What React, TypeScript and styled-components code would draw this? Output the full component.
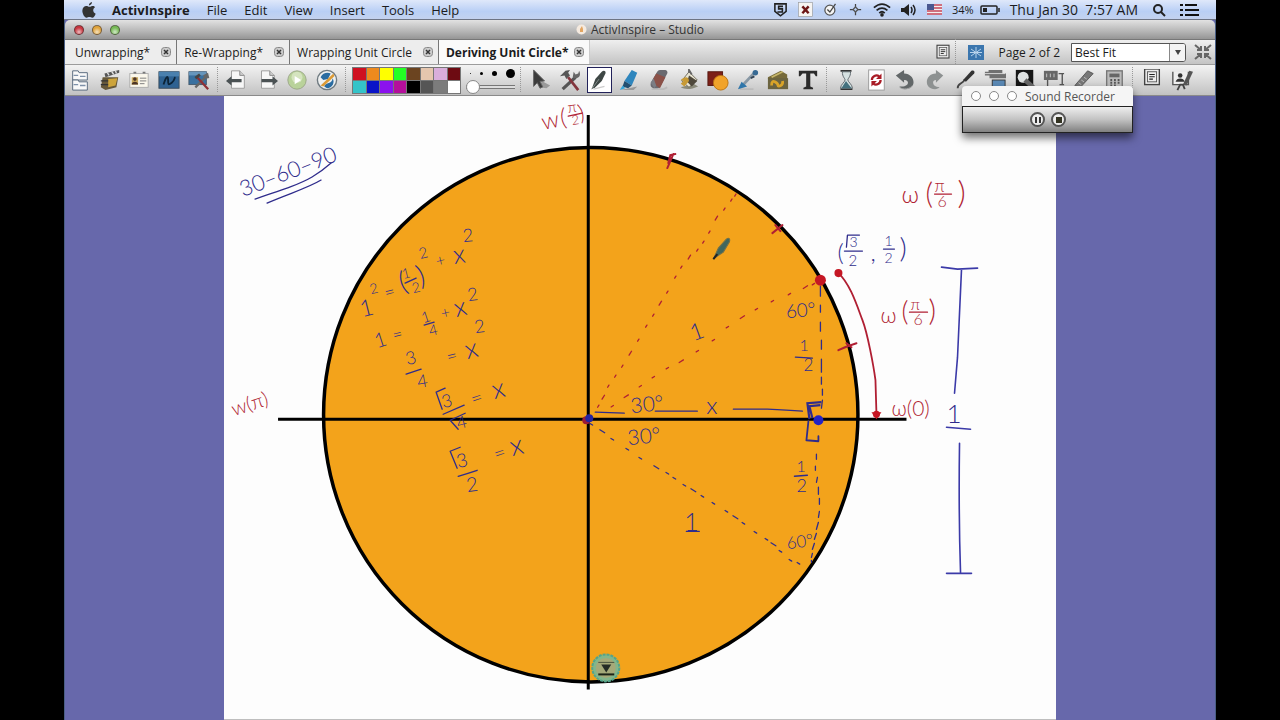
import React from 'react';
import styled, { createGlobalStyle, css } from 'styled-components';

const GlobalStyle = createGlobalStyle`
  *, *::before, *::after { box-sizing: border-box; }
  html { background: #000; }
  body { margin: 0; background: #000; font-family: "Open Sans", "Noto Sans", sans-serif; color: #1c1c20; }
  button, select { font: inherit; color: inherit; }
  button { display: inline-flex; align-items: center; justify-content: center; padding: 0; border: 0; background: none; }
  svg { display: block; }
`;

/* ---------- desktop frame ---------- */

const Desktop = styled.div`
  position: relative;
  margin: 0 5%;
  min-height: 100vh;
  display: flex;
  flex-direction: column;
  overflow: hidden;
  background: #4a5f85;
`;

const MenuBar = styled.nav`
  height: 20px;
  display: flex;
  align-items: center;
  padding: 0 17px;
  font-size: 13px;
  line-height: 18px;
  background: linear-gradient(#dfe8fa, #b9cff5 60%, #c3d2ef);
  border-bottom: 1px solid #6d7484;
`;

const AppleButton = styled.button`
  width: 16px;
  margin-right: 15px;
`;

const MenuItem = styled.button<{ $strong?: boolean }>`
  margin-right: 17px;
  white-space: nowrap;
  font-weight: ${(p) => (p.$strong ? 700 : 400)};
`;

const StatusArea = styled.div`
  margin-left: auto;
  display: flex;
  align-items: center;
  gap: 10px;
`;

const Percent = styled.span`
  font-size: 11px;
  margin-right: -4px;
`;

const Clock = styled.span`
  font-size: 14px;
  white-space: pre;
`;

/* ---------- window ---------- */

const Window = styled.main`
  flex: 1;
  margin: 0 1px;
  display: flex;
  flex-direction: column;
  background: #6768ab;
`;

const TitleBar = styled.header`
  position: relative;
  height: 20px;
  display: flex;
  align-items: center;
  justify-content: center;
  gap: 4px;
  border-radius: 5px 5px 0 0;
  font-size: 12px;
  line-height: 18px;
  color: #333;
  background: linear-gradient(#e2e2e2, #bdbdbd 50%, #959595);
  border-bottom: 1px solid #777;
`;

const Lights = styled.div`
  position: absolute;
  left: 9px;
  display: flex;
  gap: 8px;
`;

const Light = styled.button<{ $color: string }>`
  width: 10px;
  height: 10px;
  border-radius: 50%;
  border: 1px solid rgba(50, 40, 40, 0.6);
  background: radial-gradient(circle at 50% 75%, #ffffffaa, transparent 60%), ${(p) => p.$color};
`;

const TabRow = styled.div`
  height: 25px;
  display: flex;
  align-items: stretch;
  font-size: 12px;
  background: linear-gradient(#efefef, #c4c4c4);
  border-bottom: 1px solid #9c9c9c;
`;

const Tab = styled.div<{ $active?: boolean }>`
  display: flex;
  align-items: center;
  gap: ${(p) => (p.$active ? 6 : 11)}px;
  padding: 0 5px 0 7px;
  border-right: 1px solid #777;
  background: #ededed;
  &:first-child { padding-left: 10px; }
  ${(p) => p.$active && css`
    font-weight: 700;
    background: #fafafa;
    border-right-color: #ccc;
  `}
`;

const TabLabel = styled.button`
  white-space: nowrap;
  font-weight: inherit;
`;

const CloseButton = styled.button`
  width: 10px;
  height: 10px;
`;

const TabTools = styled.div`
  margin-left: auto;
  padding-right: 3px;
  display: flex;
  align-items: center;
`;

const IconButton = styled.button`
  width: 18px;
  height: 20px;
`;

const ResetPageButton = styled(IconButton)`
  margin-left: 7px;
`;

const PageLabel = styled.span`
  margin: 0 11px 0 14px;
  white-space: nowrap;
`;

const ZoomBox = styled.div`
  position: relative;
  width: 115px;
  height: 19px;
  margin-right: 8px;
`;

const ZoomSelect = styled.select`
  appearance: none;
  width: 100%;
  height: 100%;
  padding: 0 20px 0 3px;
  border: 1px solid #555;
  border-radius: 0 3px 3px 0;
  background: #fff;
`;

const ZoomArrow = styled.span`
  position: absolute;
  right: 1px;
  top: 1px;
  width: 16px;
  height: 17px;
  display: flex;
  align-items: center;
  justify-content: center;
  border-left: 1px solid #888;
  pointer-events: none;
  background: #f4f4f4;
  border-radius: 0 2px 2px 0;
`;

/* ---------- toolbar ---------- */

const Toolbar = styled.div`
  height: 31px;
  display: flex;
  align-items: center;
  background: linear-gradient(#f3f3f3, #c2c2c2);
  border-bottom: 1px solid #8a8a8a;
`;

const ToolGroup = styled.div<{ $width: number }>`
  flex: 0 0 ${(p) => p.$width}px;
  display: flex;
  align-items: center;
`;

const ToolButton = styled.button<{ $active?: boolean }>`
  flex: 1 1 0;
  min-width: 0;
  height: 26px;
  ${(p) => p.$active && css`
    flex: 0 0 25px;
    margin: 0 2px;
    background: #fff;
    border: 1px solid #22225a;
  `}
`;

const Separator = styled.i`
  flex: 0 0 8px;
  height: 26px;
  background: linear-gradient(90deg, transparent 3px, #999 3px, #999 4px, transparent 4px);
  mask-image: repeating-linear-gradient(#000 0 1px, transparent 1px 2px);
`;

const Palette = styled.div`
  flex: 0 0 109px;
  margin-left: 2px;
  display: grid;
  grid-template-columns: repeat(8, 1fr);
  gap: 1px;
  padding: 1px;
  background: #777;
`;

const Swatch = styled.button<{ $color: string }>`
  height: 12px;
  background: ${(p) => p.$color};
`;

const WidthPicker = styled.div`
  flex: 0 0 51px;
  margin-left: 5px;
  display: flex;
  flex-direction: column;
`;

const DotRow = styled.div`
  height: 14px;
  display: flex;
  align-items: center;
  gap: 9px;
  padding-left: 4px;
`;

const Dot = styled.button<{ $size: number }>`
  width: ${(p) => p.$size}px;
  height: ${(p) => p.$size}px;
  border-radius: 50%;
  background: #000;
`;

const WidthSlider = styled.input`
  appearance: none;
  width: 49px;
  height: 14px;
  margin: 0;
  background: linear-gradient(transparent 5px, #777 5px, #777 6px, #ddd 6px, #ddd 8px, #777 8px, #777 9px, transparent 9px);
  &::-webkit-slider-thumb {
    appearance: none;
    width: 14px;
    height: 14px;
    border-radius: 50%;
    border: 1px solid #888;
    background: #fff;
  }
`;

/* ---------- board ---------- */

const Stage = styled.section`
  flex: 1;
  display: flex;
  justify-content: center;
  align-items: flex-start;
`;

const Board = styled.svg`
  flex: 0 0 auto;
  width: 72.4%;
  height: auto;
  background: #fdfdfd;
  font-family: Lato, "Open Sans", sans-serif;
  font-weight: 300;
`;

const Recorder = styled.aside`
  position: absolute;
  top: 86px;
  right: 83px;
  width: 171px;
  border-radius: 4px 4px 2px 2px;
  box-shadow: 0 5px 9px rgba(0, 0, 0, 0.55);
  background: #f5f5f5;
`;

const RecorderTitle = styled.div`
  height: 20px;
  display: flex;
  align-items: center;
  gap: 8px;
  padding-left: 9px;
  font-size: 12px;
  color: #555;
`;

const HollowLight = styled.button`
  width: 10px;
  height: 10px;
  border-radius: 50%;
  border: 1px solid #888;
  background: #fff;
`;

const RecorderName = styled.span`
  white-space: nowrap;
`;

const RecorderBody = styled.div`
  height: 27px;
  display: flex;
  align-items: center;
  justify-content: center;
  gap: 6px;
  padding-left: 1px;
  border: 1px solid #222;
  background: linear-gradient(#eee, #c2c2c2 50%, #808080);
`;

const RoundButton = styled.button`
  width: 15px;
  height: 15px;
  border: 2px solid #555;
  border-radius: 50%;
  background: #eee;
`;

/* ---------- icons ---------- */

const Icon = ({ children, size = 24 }: { children: React.ReactNode; size?: number }) => (
  <svg width={size} height={size} viewBox="0 0 24 24" fill="none" aria-hidden="true">{children}</svg>
);

const AppleIcon = () => (
  <Icon size={16}>
    <path fill="#333" d="M16.500 0c.2 2.500-2 5-4.600 5.200C11.600 2.800 14 .3 16.500 0ZM21 8c-4 2.500-3.200 8 1 9.500-1 2.800-3 6-5 6-1.800 0-2.500-1-4.400-1s-2.700 1-4.400 1C5.400 23.500 2 17.500 2 13c0-4.500 3-7 6-7 2 0 3.300 1.200 4.800 1.200S15.500 6 18 6c1.200 0 2.400.8 3 2Z" />
  </Icon>
);

const CloseIcon = () => (
  <svg width="10" height="10" viewBox="0 0 10 10" aria-hidden="true">
    <rect x=".5" y=".5" width="9" height="9" rx="3" fill="#ccc" stroke="#888" />
    <path d="M3 3l4 4M7 3L3 7" stroke="#333" strokeWidth="1.500" />
  </svg>
);

const NotesIcon = () => (
  <>
    <rect x="4" y="3" width="16" height="17" fill="#eee" stroke="#444" strokeWidth="1.500" />
    <rect x="7" y="6" width="10" height="11" stroke="#555" />
    <path d="M9 9h6M9 11.500h6M9 14h4" stroke="#222" strokeWidth="1.200" />
  </>
);

const PageArrow = ({ left }: { left?: boolean }) => (
  <>
    <path d="M6 2h9l5 5v14H6z" fill="#f7f7f7" stroke="#999" />
    <path d="M15 2v5h5" fill="#ccc" stroke="#888" />
    {left
      ? <path d="M17 14.500H6V18l-6-5 6-5v3h11z" fill="#4b5254" />
      : <path d="M6 14.500h12V18l6-5-6-5v3H6z" fill="#4b5254" />}
  </>
);

const tools: Record<string, React.ReactNode> = {
  browsers: (
    <>
      <path d="M4 2h6l1 2h9v8H4z" fill="#f8f8f8" stroke="#52657a" />
      <path d="M4 12h6l1 2h9v9H4z" fill="#f8f8f8" stroke="#52657a" />
      <path d="M5 7h5M5 17h5M12 8h6M12 18h6" stroke="#7d90a8" strokeWidth="1.500" />
    </>
  ),
  record: (
    <>
      <path d="M6 5l16-4v3L7 9z" fill="#555" />
      <path d="M9 4l2 3M14 3l2 3M18 2l1 3" stroke="#ddd" strokeWidth="1.500" />
      <path d="M4 9h17l-2 11-12 3-5-3z" fill="#66583a" />
      <path d="M10 11l10-1-2 8-8 2z" fill="#cda43b" />
      <path d="M2 13h8M2 17h8" stroke="#333" strokeWidth="1.500" />
    </>
  ),
  card: (
    <>
      <rect x="2" y="5" width="20" height="15" fill="#faf7ec" stroke="#aaa" />
      <path d="M6 4h3M16 4h3" stroke="#777" strokeWidth="2" />
      <rect x="4" y="9" width="7" height="8" fill="#c7a75c" />
      <circle cx="7.500" cy="11" r="2" fill="#4d3526" />
      <path d="M4 17c0-4 7-4 7 0z" fill="#4d3526" />
      <path d="M13 10h7M13 13h7M13 16h5" stroke="#777" />
    </>
  ),
  desktop: (
    <>
      <rect x="1" y="3" width="22" height="18" fill="#2f6292" stroke="#394b5c" />
      <path d="M1 3h22v5H1z" fill="#4a80ae" />
      <path d="M6 17c3-10 5-10 5-5s0 6 4 3 2-5 4-6" stroke="#0c2438" strokeWidth="2" />
    </>
  ),
  desktopTools: (
    <>
      <rect x="1" y="3" width="19" height="14" fill="#39709f" stroke="#44586b" />
      <path d="M1 3h19v4H1z" fill="#6796bc" />
      <path d="M8 20L20 8M17 8l4-2 1 4" stroke="#666" strokeWidth="2.500" />
      <path d="M10 9l12 13" stroke="#8f2f35" strokeWidth="2.500" />
      <path d="M8 10l5-4" stroke="#444" strokeWidth="3" />
    </>
  ),
  previous: <PageArrow left />,
  next: <PageArrow />,
  play: (
    <>
      <circle cx="12" cy="12" r="10" fill="#b9d29a" stroke="#9aa588" />
      <circle cx="12" cy="9" r="6" fill="#d5e4bf" />
      <path d="M9.500 7.500l7 4.500-7 4.500z" fill="#fff" />
    </>
  ),
  express: (
    <>
      <circle cx="12" cy="12" r="10.500" fill="#eef0f0" stroke="#6f7a80" strokeWidth="1.500" />
      <path d="M5 9c2-5 8-6 11-4l-3 6-5 1z" fill="#2a6ca1" />
      <path d="M9 19c1-5 9-2 9-9 3 4 0 11-6 11z" fill="#2a6ca1" />
      <path d="M5 18L19 5l1 3L8 19z" fill="#db9a36" />
    </>
  ),
  select: (
    <>
      <path d="M11 20l8 1 4-3-9-5z" fill="#9a9a9a" />
      <path d="M5 1l12 12-5 .5 3 6-3 1.500-3-6-4 4z" fill="#3c3c3c" stroke="#666" />
    </>
  ),
  wrench: (
    <>
      <path d="M4 22L18 9" stroke="#555" strokeWidth="3.500" />
      <path d="M15 9l1-6 2 3 3-1 1-3c3 6-2 9-6 8z" fill="#666" />
      <path d="M1 8l6-6 5-1-2 3 2 3-4 4-2-4z" fill="#555" />
      <path d="M10 9l11 14" stroke="#83353d" strokeWidth="3" />
    </>
  ),
  pen: (
    <>
      <path d="M4 22l4-11 7-8c2-2 5-1 4 2l-4 8-7 7z" fill="#3e4745" />
      <path d="M4 22l8-11" stroke="#8a9490" />
      <path d="M6 22l12-3" stroke="#ccc" strokeWidth="1.500" />
    </>
  ),
  highlighter: (
    <>
      <path d="M3 23l18-4-4 4z" fill="#999" />
      <path d="M7 13l8-12 6 3-6 14z" fill="#2f86bd" />
      <path d="M7 13l8 5-4 3-6-2z" fill="#234f70" />
      <path d="M5 18l-3 5 6-2z" fill="#35a7da" />
    </>
  ),
  eraser: (
    <>
      <path d="M4 22h13l4-2" stroke="#bbb" strokeWidth="2" />
      <path d="M3 15L10 3q1-2 3-2h6q3 1 2 4l-7 13q-1 3-4 3H6q-4-1-3-6z" fill="#6a6a70" />
      <path d="M6 10l3-5 10 4-6 12-7-5z" fill="#8b5148" />
      <path d="M3 15l3-5 3 8-2 3z" fill="#7b7d84" />
    </>
  ),
  fill: (
    <>
      <path d="M3 20c5 3 12 2 19-1l-5-3z" fill="#8a8a7a" />
      <path d="M12 3l9 9-9 8-8-7z" fill="#e8e5d2" stroke="#6a6656" />
      <path d="M12 7l9 6-6 6-5-5z" fill="#4e483b" />
      <path d="M3 12c5-5 9-3 9 1l-5 6-4-3 3-3z" fill="#c79a35" />
      <path d="M12 4V1l3 5" stroke="#666" strokeWidth="2" />
    </>
  ),
  shapes: (
    <>
      <rect x="1" y="3" width="16" height="15" fill="#7d2018" stroke="#54170f" />
      <circle cx="15" cy="15" r="8" fill="#f1a32a" stroke="#b97210" />
    </>
  ),
  connector: (
    <>
      <path d="M3 22h15" stroke="#bbb" strokeWidth="2" />
      <path d="M6 18L19 4" stroke="#8898a5" strokeWidth="3" />
      <circle cx="20" cy="4" r="3" fill="#376a94" />
      <path d="M1 22l4-8 6 5z" fill="#2f76aa" />
      <path d="M15 10l4-2" stroke="#345" strokeWidth="2" />
    </>
  ),
  clip: (
    <>
      <path d="M1 9l14-7 7 4v5H1z" fill="#766a3a" />
      <path d="M5 9l12-6" stroke="#c6b66a" strokeWidth="2" />
      <rect x="1" y="10" width="22" height="12" fill="#6b6440" />
      <path d="M5 18c0-9 7-2 7 0s6 0 5-5" stroke="#d9a428" strokeWidth="3" />
    </>
  ),
  text: <path d="M2 2h20v6h-1.500l-2-3h-4v14l3 1.500V22H7v-1.500l3-1.500V5H6L3.500 8H2z" fill="#2b2b2b" />,
  timer: (
    <>
      <path d="M6 2h12M6 22h13" stroke="#333" strokeWidth="2" />
      <path d="M8 3c0 6 3 7 3 9s-5 5-5 9h13c0-4-5-7-5-9s3-3 3-9z" fill="#d6e1e1" stroke="#576066" />
      <path d="M7 21l5-8 6 8z" fill="#43707d" />
    </>
  ),
  reset: (
    <>
      <rect x="4" y="1" width="17" height="22" fill="#fff" stroke="#999" />
      <path d="M7.500 12a5 5 0 0 1 8-4M17 12a5 5 0 0 1-8 4" stroke="#a91c26" strokeWidth="2.500" />
      <path d="M18 5v6h-6zM7 19v-6h6z" fill="#a91c26" />
    </>
  ),
  undo: (
    <>
      <path d="M2 7l9-6v4c12 0 15 17 1 17-3 0-5-1-6-3 7 1 10-2 9-5-1-2-3-2-4-2v3z" fill="#626768" />
      <path d="M6 20c4 3 12 2 14-2" stroke="#aaa" />
    </>
  ),
  redo: <path d="M21 7l-8-6v4C1 5-1 22 12 22c2 0 4-1 5-2-8 0-9-8-4-8v3z" fill="#8d9191" />,
  recorder: (
    <>
      <path d="M4 21c0-7 5-3 8-10" stroke="#444" strokeWidth="2" />
      <path d="M10 12l9-10c3-1 4 1 3 3l-9 9z" fill="#333" />
    </>
  ),
  camera: (
    <>
      <path d="M5 1h15v4h4v5H6V7H1V3h4z" fill="#707070" />
      <path d="M1 5h22" stroke="#ddd" />
      <rect x="9" y="12" width="14" height="9" fill="#5a89b5" stroke="#333" />
    </>
  ),
  spotlight: (
    <>
      <rect x="2" y="1" width="19" height="18" fill="#161616" />
      <circle cx="10" cy="9" r="6" fill="#dfe2e2" />
      <path d="M12 12l10 9" stroke="#666" strokeWidth="5" />
    </>
  ),
  video: (
    <>
      <path d="M1 2h15v10H1z" fill="#676767" />
      <path d="M4 5v4M8 5v4M12 5v4" stroke="#ccc" />
      <path d="M17 5h6M21 5v12M18 17h5M5 12v9" stroke="#555" strokeWidth="1.500" />
    </>
  ),
  ruler: (
    <>
      <path d="M2 18L16 2l6 3L8 20z" fill="#777" stroke="#555" />
      <path d="M6 15l3 2M9 12l3 2M12 9l3 2" stroke="#bbb" />
    </>
  ),
  calculator: (
    <>
      <rect x="4" y="2" width="17" height="21" fill="#bbb" stroke="#777" strokeWidth="1.500" />
      <rect x="7" y="5" width="11" height="4" fill="#666" />
      <path d="M8 12h2M12 12h2M16 12h2M8 15h2M12 15h2M16 15h2M8 18h2M12 18h2" stroke="#555" strokeWidth="2" />
    </>
  ),
  notes: <g transform="translate(0 -3)"><NotesIcon /></g>,
  presenter: (
    <>
      <path d="M2 3v14h17V3" fill="#eee" stroke="#555" strokeWidth="1.500" />
      <circle cx="10" cy="7" r="2.500" fill="#333" />
      <path d="M5 14c1-5 9-5 10 0z" fill="#333" />
      <path d="M13 17l7-15 4 1-7 15z" fill="#555" />
      <path d="M7 23l3-6h3l2 5" stroke="#444" strokeWidth="2" />
    </>
  ),
};

const Tools = ({ names, width }: { names: string[]; width: number }) => (
  <ToolGroup $width={width}>
    {names.map((name) => (
      <ToolButton key={name} $active={name === 'pen'} aria-label={name}>
        <Icon size={22}>{tools[name]}</Icon>
      </ToolButton>
    ))}
  </ToolGroup>
);

const statusIcons: React.ReactNode[] = [
  <>
    <path d="M3 3h18v12l-9 7-9-7z" stroke="#222" strokeWidth="2.500" />
    <path d="M16 7H9v4h6v5H7" stroke="#222" strokeWidth="2.500" />
  </>,
  <>
    <rect x="1" y="1" width="22" height="22" fill="#f6f4f2" stroke="#999" />
    <path d="M7 7l10 11M17 7L7 18" stroke="#6d1616" strokeWidth="4" />
  </>,
  <>
    <circle cx="11" cy="13" r="8" fill="#f4f4f4" stroke="#555" strokeWidth="2" />
    <path d="M7 12l4 4 9-13" stroke="#444" strokeWidth="2" />
  </>,
  <>
    <path d="M12 3v6M12 15v6M3 12h6M15 12h6" stroke="#444" strokeWidth="2" />
    <path d="M12 8l4 4-4 4-4-4z" stroke="#555" strokeWidth="2" />
  </>,
];

const statusNames = ['Security', 'Blocked', 'Check', 'Location'];

/* ---------- handwriting on the board ---------- */

const BLUE = '#2f2c8c';
const RED = '#b01f33';

type Mark = [text: string, x: number, y: number, size: number, angle?: number];

const blueMarks: Mark[] = [
  ['30–60–90', 243, 197, 22, -21],
  ['1', 362, 317, 23, -14], ['2', 371, 294, 14, -14], ['=', 386, 299, 18, -14],
  ['(', 402, 292, 28, -18], ['1', 403, 279, 14, -14], ['2', 413, 293, 14, -14], [')', 420, 286, 28, -18],
  ['2', 420, 259, 15, -14], ['+', 437, 267, 16, -14], ['x', 454, 264, 26, -8], ['2', 463, 242, 18, -5],
  ['1', 377, 348, 20, -18], ['=', 394, 341, 17, -14],
  ['1', 423, 323, 15, -18], ['4', 430, 336, 15, -14], ['+', 442, 319, 16, -14], ['x', 456, 317, 26, -14], ['2', 468, 301, 18, -8],
  ['3', 407, 365, 18, -14], ['4', 418, 388, 18, -10], ['=', 448, 363, 18, -14], ['x', 467, 359, 27, -14], ['2', 475, 333, 18, -8],
  ['3', 443, 408, 18, -14], ['4', 458, 429, 17, -14], ['=', 473, 406, 20, -18], ['x', 494, 399, 27, -14],
  ['3', 458, 468, 19, -14], ['2', 467, 492, 20, -8], ['=', 496, 461, 20, -18], ['x', 512, 456, 28, -14],
  ['1', 693, 341, 23, -20],
  ['60°', 786, 318, 19, -5], ['1', 799, 351, 16], ['2', 803, 371, 17],
  ['30°', 631, 413, 21, -6], ['x', 706, 414, 24], ['30°', 628, 445, 21, -6],
  ['1', 684, 531, 25], ['1', 796, 472, 16], ['2', 796, 492, 18], ['60°', 787, 549, 17, -8],
  ['(', 837, 261, 24], ['3', 849, 247, 14], ['2', 848, 266, 15], [',', 870, 261, 24],
  ['1', 884, 246, 14], ['2', 884, 263, 14], [')', 899, 258, 28], ['1', 946, 423, 26],
];

const redMarks: Mark[] = [
  ['w', 543, 130, 23, -12], ['(', 561, 126, 24, -8], ['π', 568, 113, 15, -8], ['2', 572, 125, 13, -8], [')', 580, 121, 22, -14],
  ['ω', 901, 203, 24], ['(', 925, 204, 29], ['π', 934, 192, 17], ['6', 937, 207, 16], [')', 957, 204, 32],
  ['ω', 880, 323, 22], ['(', 901, 321, 27], ['π', 910, 310, 16], ['6', 913, 325, 16], [')', 928, 321, 29],
  ['w(π)', 234, 416, 20, -18], ['ω(0)', 891, 416, 21],
];

const dotsSteep = [[598, 406], [603, 397], [608, 386], [615, 376], [622, 366], [630, 353], [638, 340], [646, 326], [653, 315], [660, 303], [667, 292], [675, 277], [681, 267], [689, 257], [697, 250], [703, 242], [709, 232], [716, 218], [724, 209], [731, 200], [735, 195]];
const dotsShallow = [[612, 406], [626, 396], [640, 386], [653, 377], [667, 368], [681, 361], [697, 351], [713, 340], [727, 327], [742, 317], [756, 309], [772, 301], [789, 294], [805, 287], [813, 284]];
const dotsLower = [[591, 424], [602, 431], [612, 439], [627, 449], [640, 458], [656, 467], [667, 473], [674, 478], [684, 485], [693, 490], [702, 496], [713, 503], [726, 511], [735, 517], [743, 523], [755, 532], [766, 539], [773, 544], [780, 551], [790, 560], [798, 563]];

const dashes = (points: number[][], dx: number, dy: number) =>
  points.map(([x, y], i) => {
    const k = i % 4 === 1 ? 1.5 : 0.8;
    return `M${x - dx * k} ${y - dy * k}L${x + dx * k} ${y + dy * k}`;
  }).join('');

const Marks = ({ items, color }: { items: Mark[]; color: string }) => (
  <g fill={color}>
    {items.map(([text, x, y, size, angle = 0]) => (
      <text key={`${x}-${y}-${text}`} x={x} y={y} fontSize={size} transform={`rotate(${angle} ${x} ${y})`}>{text}</text>
    ))}
  </g>
);

const Drawing = () => (
  <Board viewBox="224 96 832 624" role="img" aria-label="Unit circle with a 30-60-90 triangle">
    <circle cx="590.500" cy="414.500" r="267" fill="#f3a31b" stroke="#000" strokeWidth="3.500" />
    <path d="M588 115V689M278 419H906" stroke="#000" strokeWidth="3" />
    <path d="M224 719.500H1056" stroke="#808080" />

    <g fill="none" stroke={BLUE} strokeWidth="1.300" strokeLinecap="round" strokeLinejoin="round">
      <path d="M255 199C285 189 300 184 312 177Q322 171 331 163M267 203C290 193 308 188 321 180" />
      <path d="M405 283l11-5M424 325l10-3M406 374l15-5M443 414l21-9M458 476q10-3 19-6" />
      <path d="M442 409l-6-17 9-4M458 429l-8-9 15-7M457 468l-7-17 10-4" />
      <path d="M795 357l17 1M794 476l13-1M844 251h18M846 247l1-12h12M883 249h11M686 531h13" />
      <path d="M595 412l29 1M655 411h42M733 409h34q20 1 35 2" />
      <path d="M820 286v10M820 305v7M820 322v9M821 340v9M821 359v13M821 377v7M822 389v6M822 400l-1 8" />
      <path d="M816 454v5M815 466v4M817 477l-1 5M818 487v7M819 498v6M819 511l-1 6M818 522l-2 7M816 533l-2 6M814 543l-2 6M812 553l-1 4M811 560v2" />
      <path d={dashes(dotsLower, 1.6, 1)} />
      <path d="M808 421l-2 19 12 1v-5" strokeWidth="1.800" />
    </g>
    <path d="M821 402l-14 1 2 16M820 405l-11 1 3 12" fill="none" stroke={BLUE} strokeWidth="2.200" />
    <path d="M941 267l16 2 20-1M961 269l-4 88-3 36M946 427l24 2M959 443q-1 70 1 129M946 573h25" fill="none" stroke="#3b3aa8" strokeWidth="1.600" strokeLinecap="round" />

    <g fill="none" stroke={RED} strokeWidth="1.500" strokeLinecap="round">
      <path d={dashes(dotsSteep, 0.8, -1.3)} strokeWidth="1.300" />
      <path d={dashes(dotsShallow, 1.4, -0.9)} strokeWidth="1.300" />
      <path d="M667 168l6-14M668 163l2-8 5-1M772 233l10-8M775 225l5 6M838 350q8-4 18-7M846 343l5 4" strokeWidth="2" />
      <path d="M838 273C850 284 857 307 862 320S873 365 875 380T876 414" strokeWidth="1.800" />
      <path d="M568 116l14-3M934 194h17M909 312h18" strokeWidth="1.300" />
    </g>
    <circle cx="586" cy="420" r="4" fill="#9b1c38" />
    <circle cx="589" cy="418" r="4" fill="#2424a0" />
    <circle cx="818" cy="420" r="5" fill="#2323c4" />
    <g fill="#c51724">
      <circle cx="820" cy="280" r="5.500" />
      <circle cx="838" cy="273" r="4" />
      <path d="M871 412h10l-5 7z" />
      <circle cx="876" cy="414" r="3.500" />
    </g>

    <Marks items={blueMarks} color={BLUE} />
    <Marks items={redMarks} color={RED} />

    <g>
      <path d="M713 259l5-11 8-9c3-2 4 0 3 3l-6 10-6 4z" fill="#3f675e" stroke="#70714c" />
      <path d="M713 259l4-5" stroke="#222" strokeWidth="2" />
    </g>
    <g>
      <circle cx="605.500" cy="667.500" r="13.500" fill="#82b68b" stroke="#54a48b" strokeWidth="2" strokeDasharray="3 1" />
      <circle cx="605.500" cy="667.500" r="10" fill="#a5a979" />
      <path d="M598 662h16" stroke="#4d5640" />
      <path d="M598 674h16" stroke="#1d2418" strokeWidth="2" />
      <path d="M601 664h10l-5 8z" fill="#252b25" />
    </g>
  </Board>
);

/* ---------- page ---------- */

const colors = ['#cf1020', '#ee8a1d', '#ffff00', '#24ff24', '#6b4420', '#e5c6ae', '#d9aedb', '#6d0b12',
  '#35c4c9', '#0a14c8', '#8b12ee', '#b50f9b', '#000', '#555', '#7c7c7c', '#fff'];

const documents = [
  { name: 'Unwrapping*' },
  { name: 'Re-Wrapping*' },
  { name: 'Wrapping Unit Circle' },
  { name: 'Deriving Unit Circle*', active: true },
];

export default function App() {
  return (
    <>
      <GlobalStyle />
      <Desktop>
        <MenuBar>
          <AppleButton aria-label="Apple menu"><AppleIcon /></AppleButton>
          <MenuItem $strong>ActivInspire</MenuItem>
          {['File', 'Edit', 'View', 'Insert', 'Tools', 'Help'].map((m) => <MenuItem key={m}>{m}</MenuItem>)}
          <StatusArea>
            {statusIcons.map((icon, i) => (
              <button key={statusNames[i]} aria-label={statusNames[i]}><Icon size={15}>{icon}</Icon></button>
            ))}
            <button aria-label="Wi-Fi">
              <svg width="18" height="15" viewBox="0 0 20 16" fill="none" stroke="#222" strokeWidth="2">
                <path d="M1 6q9-8 18 0M4 9q6-5 12 0M7 12q3-3 6 0" /><circle cx="10" cy="14" r="1" fill="#222" />
              </svg>
            </button>
            <button aria-label="Volume">
              <svg width="16" height="14" viewBox="0 0 16 14" fill="none" stroke="#222" strokeWidth="1.500">
                <path d="M0 5h3l5-4v12L3 9H0z" fill="#222" stroke="none" /><path d="M10 4q2 3 0 6M12 2q4 5 0 10" />
              </svg>
            </button>
            <button aria-label="Input language">
              <svg width="15" height="11" viewBox="0 0 15 11">
                <rect width="15" height="11" fill="#f5eeee" />
                <path d="M0 1h15M0 4h15M0 7h15M0 10h15" stroke="#c2455a" strokeWidth="1.500" />
                <rect width="7" height="6" fill="#4a578f" />
              </svg>
            </button>
            <Percent>34%</Percent>
            <button aria-label="Battery">
              <svg width="20" height="10" viewBox="0 0 20 10" fill="none" stroke="#222" strokeWidth="1.500">
                <rect x="1" y="1" width="16" height="8" rx="1" /><path d="M19 3v4" /><path d="M3 3h4v4H3z" fill="#222" stroke="none" />
              </svg>
            </button>
            <Clock>{'Thu Jan 30  7:57 AM'}</Clock>
            <button aria-label="Search">
              <svg width="22" height="14" viewBox="0 0 22 14" fill="none" stroke="#222" strokeWidth="2">
                <circle cx="10" cy="6" r="4" /><path d="M13 9l4 4" />
              </svg>
            </button>
            <button aria-label="Notification centre">
              <svg width="19" height="12" viewBox="0 0 19 12" stroke="#111" strokeWidth="2">
                <path d="M0 1h3M0 6h3M0 11h3M5 1h12M5 6h14M5 11h14" />
              </svg>
            </button>
          </StatusArea>
        </MenuBar>

        <Window>
          <TitleBar>
            <Lights>
              <Light $color="#c8373f" aria-label="Close" />
              <Light $color="#e0a43c" aria-label="Minimise" />
              <Light $color="#76ba56" aria-label="Zoom" />
            </Lights>
            <svg width="11" height="11" viewBox="0 0 11 11" aria-hidden="true">
              <circle cx="5.500" cy="5.500" r="5" fill="#f5eadf" /><path d="M4 8V5l2-3 1 3v3z" fill="#e3a560" />
            </svg>
            <span>ActivInspire – Studio</span>
          </TitleBar>

          <TabRow>
            {documents.map((d) => (
              <Tab key={d.name} $active={d.active}>
                <TabLabel>{d.name}</TabLabel>
                <CloseButton aria-label={`Close ${d.name}`}><CloseIcon /></CloseButton>
              </Tab>
            ))}
            <TabTools>
              <IconButton aria-label="Notes"><Icon size={20}><NotesIcon /></Icon></IconButton>
              <Separator />
              <ResetPageButton aria-label="Reset page">
                <svg width="16" height="16" viewBox="0 0 16 16">
                  <rect width="16" height="15" y="1" fill="#3b76ae" />
                  <path d="M8 3v11M3 5l10 7M13 5L3 12M2 8.500h12" stroke="#b9d4ec" />
                </svg>
              </ResetPageButton>
              <PageLabel>Page 2 of 2</PageLabel>
              <ZoomBox>
                <ZoomSelect aria-label="Zoom" defaultValue="Best Fit"><option>Best Fit</option></ZoomSelect>
                <ZoomArrow><svg width="6" height="5" viewBox="0 0 6 5"><path d="M0 0h6L3 5z" fill="#444" /></svg></ZoomArrow>
              </ZoomBox>
              <IconButton aria-label="Full screen">
                <svg width="18" height="16" viewBox="0 0 18 16" fill="none" stroke="#666" strokeWidth="2">
                  <path d="M1 1l6 5M7 2v4H3M17 1l-6 5M11 2v4h4M1 15l6-5M7 14v-4H3M17 15l-6-5M11 14v-4h4" />
                </svg>
              </IconButton>
            </TabTools>
          </TabRow>

          <Toolbar>
            <Tools width={149} names={['browsers', 'record', 'card', 'desktop', 'desktopTools']} />
            <Separator />
            <Tools width={120} names={['previous', 'next', 'play', 'express']} />
            <Separator />
            <Palette>
              {colors.map((c) => <Swatch key={c} $color={c} aria-label={c} />)}
            </Palette>
            <WidthPicker>
              <DotRow>
                {[1, 3, 5, 9].map((s) => <Dot key={s} $size={s} aria-label={`Pen width ${s}`} />)}
              </DotRow>
              <WidthSlider type="range" min="0" max="20" defaultValue="0" aria-label="Pen width" />
            </WidthPicker>
            <Separator />
            <Tools width={298} names={['select', 'wrench', 'pen', 'highlighter', 'eraser', 'fill', 'shapes', 'connector', 'clip', 'text']} />
            <Separator />
            <Tools width={298} names={['timer', 'reset', 'undo', 'redo', 'recorder', 'camera', 'spotlight', 'video', 'ruler', 'calculator']} />
            <Separator />
            <Tools width={60} names={['notes', 'presenter']} />
          </Toolbar>

          <Stage>
            <Drawing />
          </Stage>
        </Window>

        <Recorder>
          <RecorderTitle>
            <HollowLight aria-label="Close recorder" />
            <HollowLight aria-label="Minimise recorder" />
            <HollowLight aria-label="Zoom recorder" />
            <RecorderName>Sound Recorder</RecorderName>
          </RecorderTitle>
          <RecorderBody>
            <RoundButton aria-label="Pause">
              <svg width="6" height="6" viewBox="0 0 6 6"><path d="M0 0h2v6H0zM4 0h2v6H4z" fill="#333" /></svg>
            </RoundButton>
            <RoundButton aria-label="Stop">
              <svg width="6" height="6" viewBox="0 0 6 6"><path d="M0 0h6v6H0z" fill="#332" /></svg>
            </RoundButton>
          </RecorderBody>
        </Recorder>
      </Desktop>
    </>
  );
}
